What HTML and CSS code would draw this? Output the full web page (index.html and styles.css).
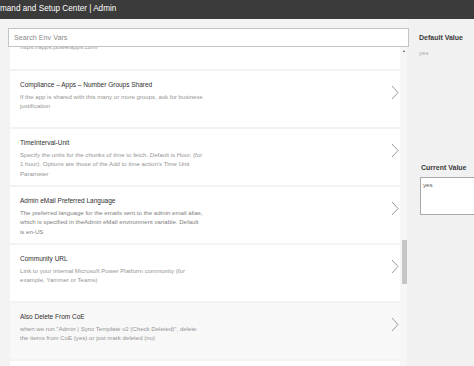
FILE: index.html
```html
<!DOCTYPE html>
<html lang="en">
<head>
<meta charset="utf-8">
<title>Command and Setup Center | Admin</title>
<link rel="stylesheet" href="styles.css">
</head>
<body>
<header class="topbar"><span class="topbar-title">mand and Setup Center | Admin</span></header>
<div class="workspace">
  <section class="main">
    <div class="list">
      <div class="list-inner">
        <div class="card card-partial">
          <div class="card-body">
            <div class="card-desc">https://apps.powerapps.com/</div>
          </div>
        </div>
        <div class="card">
          <div class="card-body">
            <div class="card-title">Compliance – Apps – Number Groups Shared</div>
            <div class="card-desc">If the app is shared with this many or more groups, ask for business<br>justification</div>
          </div>
          <svg class="chev" width="8" height="15" viewBox="0 0 8 15"><path d="M1 1 L7 7.5 L1 14" fill="none" stroke="#8c8c8c" stroke-width="0.9"/></svg>
        </div>
        <div class="card">
          <div class="card-body">
            <div class="card-title">TimeInterval-Unit</div>
            <div class="card-desc">Specify the units for the chunks of time to fetch. Default is Hour, (for<br>1 hour). Options are those of the Add to time action's Time Unit<br>Parameter</div>
          </div>
          <svg class="chev" width="8" height="15" viewBox="0 0 8 15"><path d="M1 1 L7 7.5 L1 14" fill="none" stroke="#8c8c8c" stroke-width="0.9"/></svg>
        </div>
        <div class="card">
          <div class="card-body">
            <div class="card-title">Admin eMail Preferred Language</div>
            <div class="card-desc card-desc-dark">The preferred language for the emails sent to the admin email alias,<br>which is specified in theAdmin eMail environment variable. Default<br>is en-US</div>
          </div>
          <svg class="chev" width="8" height="15" viewBox="0 0 8 15"><path d="M1 1 L7 7.5 L1 14" fill="none" stroke="#8c8c8c" stroke-width="0.9"/></svg>
        </div>
        <div class="card">
          <div class="card-body">
            <div class="card-title">Community URL</div>
            <div class="card-desc">Link to your internal Microsoft Power Platform community (for<br>example, Yammer or Teams)</div>
          </div>
          <svg class="chev" width="8" height="15" viewBox="0 0 8 15"><path d="M1 1 L7 7.5 L1 14" fill="none" stroke="#8c8c8c" stroke-width="0.9"/></svg>
        </div>
        <div class="card card-hover">
          <div class="card-body">
            <div class="card-title">Also Delete From CoE</div>
            <div class="card-desc">when we run "Admin | Sync Template v2 (Check Deleted)", delete<br>the items from CoE (yes) or just mark deleted (no)</div>
          </div>
          <svg class="chev" width="8" height="15" viewBox="0 0 8 15"><path d="M1 1 L7 7.5 L1 14" fill="none" stroke="#8c8c8c" stroke-width="0.9"/></svg>
        </div>
        <div class="card"></div>
      </div>
    </div>
    <div class="scrollbar">
      <div class="scroll-arrow"></div>
      <div class="scroll-thumb"></div>
    </div>
    <div class="searchbar">
      <div class="search-input">Search Env Vars</div>
    </div>
  </section>
  <aside class="panel">
    <div class="panel-label">Default Value</div>
    <div class="panel-value">yes</div>
    <div class="panel-label panel-label-current">Current Value</div>
    <div class="panel-box">yes</div>
  </aside>
</div>
</body>
</html>
```
FILE: styles.css
```css
html, body {
  margin: 0;
  padding: 0;
}
body {
  width: 474px;
  height: 366px;
  overflow: hidden;
  background: #f3f3f3;
  font-family: "Liberation Sans", Arial, sans-serif;
  color: #333;
}
.topbar {
  height: 19px;
  background: #3b3b3b;
  color: #fff;
  font-size: 8.2px;
  line-height: 17px;
  white-space: nowrap;
  overflow: hidden;
}
.topbar-title {
  display: inline-block;
  margin-left: 0;
}
.workspace {
  display: flex;
  height: 347px;
}
.main {
  position: relative;
  width: 407px;
  box-sizing: border-box;
  padding-left: 10px;
  display: flex;
  background: #f3f3f3;
}
.list {
  width: 390px;
  overflow: hidden;
}
.list-inner {
  margin-top: -6px;
  display: flex;
  flex-direction: column;
  gap: 2px;
}
.card {
  height: 56px;
  flex: none;
  background: #fff;
  display: flex;
  align-items: flex-start;
  box-sizing: border-box;
  padding: 9px 1px 0 10px;
}
.card-partial {
  padding-top: 29px;
}
.card-partial .card-desc {
  margin-top: 0;
}
.card-hover {
  background: #f8f8f8;
}
.card-body {
  flex: 1;
}
.card-title {
  font-size: 6.5px;
  line-height: 10px;
  color: #2e2e2e;
  white-space: nowrap;
}
.card-desc {
  margin-top: 2px;
  font-size: 6.1px;
  line-height: 9.3px;
  color: #959595;
  white-space: nowrap;
}
.card-desc-dark {
  color: #808080;
}
.chev {
  flex: none;
  margin-top: 5px;
}
.scrollbar {
  width: 7px;
  background: #f6f6f6;
  display: flex;
  flex-direction: column;
  align-items: flex-end;
}
.scroll-arrow {
  margin-top: 31px;
  margin-right: 2px;
  width: 0;
  height: 0;
  border-left: 1.5px solid transparent;
  border-right: 1.5px solid transparent;
  border-bottom: 2px solid #555;
}
.scroll-thumb {
  margin-top: 188px;
  width: 5px;
  height: 44px;
  background: #c6c6c6;
}
.searchbar {
  position: absolute;
  top: 0;
  left: 0;
  width: 409px;
  height: 28px;
  background: #f3f3f3;
  box-sizing: border-box;
  padding: 9px 0 0 8px;
}
.search-input {
  height: 19px;
  box-sizing: border-box;
  background: #fff;
  border: 1px solid #c4c4c4;
  font-size: 7.2px;
  line-height: 17px;
  padding-left: 5px;
  color: #8a8a8a;
}
.panel {
  flex: 1;
  background: #f1f1f1;
  overflow: hidden;
  box-sizing: border-box;
  padding: 14px 0 0 12px;
}
.panel-label {
  font-size: 7px;
  line-height: 10px;
  font-weight: 700;
  color: #3a3a3a;
  white-space: nowrap;
}
.panel-value {
  margin-top: 5px;
  font-size: 6.2px;
  line-height: 10px;
  color: #ababab;
}
.panel-label-current {
  margin-top: 105px;
  padding-left: 2px;
}
.panel-box {
  margin-top: 4px;
  margin-left: 1px;
  width: 70px;
  height: 38px;
  box-sizing: border-box;
  background: #fff;
  border: 1px solid #a8a8a8;
  font-size: 6.2px;
  line-height: 10px;
  padding: 2px 2px;
  color: #555;
}
```
